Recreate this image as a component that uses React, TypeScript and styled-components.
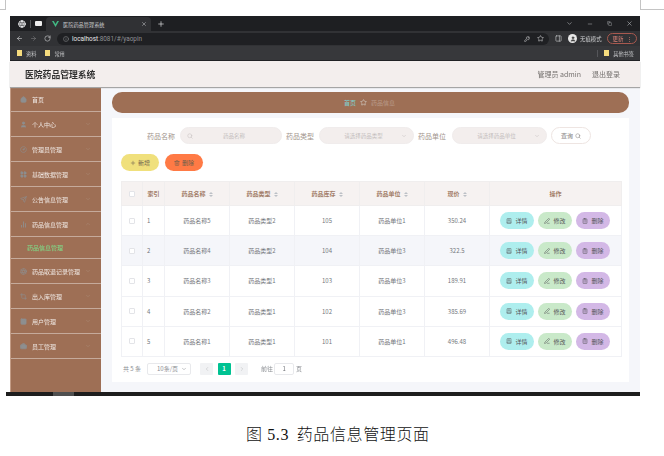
import React from "react";
import styled, { createGlobalStyle } from "styled-components";
import {
  ArrowLeft, ArrowRight, Aperture, BarChart2, BriefcaseBusiness, ChevronDown, ChevronLeft, ChevronRight, ChevronUp,
  CircleGauge, ClipboardList, Crop, Globe, Home, Info, KeyRound, LayoutGrid, Minus, PanelRight, PenLine, Plus, RotateCw,
  Search, Send, SquareUser, Star, Trash2, User, X, Copy, BookText,
} from "lucide-react";

const GlobalStyle = createGlobalStyle`
  * { box-sizing: border-box; }
  html, body { margin: 0; padding: 0; background: #fff; }
  body { font-family: "Noto Sans CJK SC", "Noto Sans", sans-serif; }
`;

const Page = styled.div`
  position: relative;
  width: 664px;
  height: 456px;
  background: #fff;
  overflow: hidden;
  padding: 16px 0 0 6px;
`;
const CropMark = styled.i<{ $side: "l" | "r" }>`
  position: absolute;
  top: 0;
  height: 10px;
  border-bottom: 1px solid #c4c4c4;
  ${(p) => (p.$side === "l" ? "left:0;width:6px;border-right:1px solid #c4c4c4;" : "left:640px;width:24px;border-left:1px solid #c4c4c4;")}
`;
const Frame = styled.div`
  width: 634px;
  height: 380px;
  display: flex;
  flex-direction: column;
  filter: blur(0.35px);
`;
const Browser = styled.div`
  margin-left: 4px;
  flex: 1;
  min-height: 0;
  display: flex;
  flex-direction: column;
`;
const TabStrip = styled.div`
  height: 15px;
  background: #1e1f22;
  display: flex;
  align-items: center;
  color: #e4e5e7;
  padding-left: 7px;
`;
const TabGlyph = styled.span`
  width: 9px;
  display: flex;
  justify-content: center;
`;
const TabDivider = styled.span`
  width: 1px;
  height: 8px;
  background: #55575a;
  margin: 0 4px;
`;
const WhiteRect = styled.span`
  width: 7px;
  height: 5px;
  background: #eee;
  border-radius: 1px;
`;
const Tab = styled.div`
  margin-left: 4px;
  width: 105px;
  height: 14px;
  align-self: flex-end;
  background: #303134;
  border-radius: 4px 4px 0 0;
  display: flex;
  align-items: center;
  padding: 0 4px 0 6px;
  font-size: 5.2px;
  color: #c9cacc;
  gap: 4px;
`;
const TabTitle = styled.span`
  flex: 1;
  white-space: nowrap;
`;
const NewTab = styled.span`
  margin-left: 6px;
  display: flex;
`;
const WindowControls = styled.div`
  margin-left: auto;
  display: flex;
  align-items: center;
  gap: 14px;
  padding-right: 7px;
  color: #b4b5b8;
`;
const Toolbar = styled.div`
  height: 15px;
  background: #313235;
  display: flex;
  align-items: center;
  padding-left: 6px;
  color: #d5d6d8;
`;
const NavIcons = styled.div`
  display: flex;
  gap: 7px;
  width: 41px;
`;
const Dim = styled.span`
  opacity: 0.45;
  display: flex;
`;
const AddressPill = styled.div`
  width: 492px;
  height: 12px;
  border-radius: 6px;
  background: #1f2023;
  display: flex;
  align-items: center;
  padding: 0 5px 0 6px;
  font-family: Roboto, sans-serif;
  font-size: 6.4px;
  color: #8f9093;
  gap: 3px;
`;
const Host = styled.span`
  color: #e6e6e8;
`;
const PillEnd = styled.div`
  margin-left: auto;
  display: flex;
  gap: 7px;
  align-items: center;
  color: #cfcfd1;
`;
const ToolRight = styled.div`
  display: flex;
  align-items: center;
  margin-left: 6px;
  gap: 5px;
  font-size: 5.4px;
  color: #cfd0d2;
`;
const Avatar = styled.span`
  width: 9px;
  height: 9px;
  border-radius: 50%;
  background: #e8e8e8;
  color: #444;
  display: flex;
  align-items: center;
  justify-content: center;
`;
const Incognito = styled.span`
  display: flex;
  align-items: center;
  gap: 3px;
  margin-left: 1px;
`;
const Update = styled.span`
  height: 11px;
  width: 30px;
  border: 1px solid #a8594f;
  border-radius: 6px;
  display: flex;
  align-items: center;
  justify-content: space-between;
  padding: 0 4px 0 5px;
  color: #e2857a;
`;
const Bookmarks = styled.div`
  height: 15px;
  background: #37383b;
  border-bottom: 1px solid #202124;
  display: flex;
  align-items: center;
  padding: 0 6px 0 7px;
  font-size: 5.2px;
  color: #c4c5c7;
`;
const Mark = styled.span`
  display: flex;
  align-items: center;
  gap: 4px;
  margin-right: 9px;
`;
const Folder = styled.i`
  width: 5px;
  height: 6px;
  background: #f6dc7e;
  display: block;
`;
const OtherMarks = styled.span`
  margin-left: auto;
  display: flex;
  align-items: center;
  gap: 4px;
  padding-left: 6px;
  border-left: 1px solid #55565a;
  height: 7px;
`;
const AppHeader = styled.header`
  height: 26px;
  background: #f3eeed;
  display: flex;
  align-items: center;
  padding: 0 20px 0 15px;
  position: relative;
  z-index: 1;
  box-shadow: 0 1px 1px #a5a5a5;
`;
const AppTitle = styled.h1`
  margin: 0;
  font-size: 8.8px;
  font-weight: 700;
  color: #2f2f2f;
  white-space: nowrap;
`;
const HeaderLink = styled.span<{ $first?: boolean }>`
  font-size: 7px;
  color: #74706e;
  margin-left: ${(p) => (p.$first ? "auto" : "11px")};
  white-space: nowrap;
`;
const Body = styled.div`
  flex: 1;
  min-height: 0;
  display: flex;
`;
const Sidebar = styled.nav`
  width: 91px;
  background: #9e6f55;
  border-left: 1px solid #c39c86;
  flex: none;
`;
const MenuRow = styled.div`
  height: 25px;
  display: flex;
  align-items: center;
  padding: 0 10px 0 9px;
  border-bottom: 1px solid #c5aa9b;
  font-size: 6px;
  color: #eee6e1;
  white-space: nowrap;
  gap: 5px;
`;
const MenuIcon = styled.span`
  width: 7px;
  display: flex;
  justify-content: center;
  color: #8e8f90;
`;
const MenuCaret = styled.span`
  margin-left: auto;
  display: flex;
  color: #ab8a77;
`;
const SubRow = styled.div`
  height: 22px;
  display: flex;
  align-items: center;
  padding-left: 16px;
  font-size: 6px;
  color: #7fe08a;
  border-bottom: 1px solid #c5aa9b;
`;
const Main = styled.main`
  flex: 1;
  min-width: 0;
  background: #f5f6fa;
  padding: 5px 11px 10px;
  display: flex;
  flex-direction: column;
  gap: 5px;
`;
const Crumb = styled.div`
  height: 21px;
  background: #9e6f55;
  border-radius: 10px;
  display: flex;
  align-items: center;
  justify-content: center;
  gap: 4px;
  padding-right: 2px;
  font-size: 6px;
`;
const CrumbHome = styled.span`
  color: #7fd2d2;
`;
const CrumbCur = styled.span`
  color: #b99a89;
`;
const CrumbStar = styled.span`
  display: flex;
  color: #d9d5d0;
`;
const Card = styled.section`
  flex: 1;
  min-height: 0;
  background: #fff;
  padding: 9px 8px 0 9px;
`;
const SearchRow = styled.div`
  height: 17px;
  display: flex;
  align-items: center;
  padding-left: 26px;
`;
const FieldLabel = styled.label<{ $gap: number }>`
  width: 28px;
  margin-right: ${(p) => p.$gap}px;
  font-size: 7px;
  color: #a2958d;
  white-space: nowrap;
`;
const Field = styled.div<{ $w: number }>`
  width: ${(p) => p.$w}px;
  height: 17px;
  margin-right: 4px;
  border-radius: 9px;
  background: #f3eeed;
  border: 1px solid #f0ecec;
  display: flex;
  align-items: center;
  padding: 0 6px;
  font-size: 5.5px;
  color: #c4bebe;
`;
const FieldText = styled.span`
  flex: 1;
  text-align: center;
  white-space: nowrap;
`;
const QueryButton = styled.button`
  width: 40px;
  height: 17px;
  border: 1px solid #eee5e2;
  border-radius: 9px;
  background: #fff;
  font: inherit;
  font-size: 6px;
  color: #84807e;
  display: flex;
  align-items: center;
  justify-content: center;
  gap: 2px;
  padding: 0;
`;
const ActionRow = styled.div`
  margin-top: 10px;
  height: 17px;
  display: flex;
  gap: 6px;
`;
const ActionButton = styled.button<{ $bg: string }>`
  width: 38px;
  height: 17px;
  border: 0;
  border-radius: 9px;
  background: ${(p) => p.$bg};
  font: inherit;
  font-size: 6px;
  color: #6a5f4c;
  display: flex;
  align-items: center;
  justify-content: center;
  gap: 2px;
  padding: 0;
`;
const Table = styled.table`
  margin-top: 10px;
  width: 500px;
  table-layout: fixed;
  border-collapse: collapse;
  font-size: 6px;
  color: #74777c;
`;
const Th = styled.th`
  height: 24px;
  background: #f6f2f1;
  border: 1px solid #f0eeee;
  padding: 0;
  font-size: 6px;
  font-weight: 700;
  color: #a37e69;
`;
const Tr = styled.tr<{ $striped: boolean }>`
  height: 30.2px;
  background: ${(p) => (p.$striped ? "#f5f6fa" : "#fff")};
`;
const Td = styled.td<{ $align?: string; $color?: string }>`
  border: 1px solid #f0f1f5;
  padding: ${(p) => (p.$align === "left" ? "0 0 0 4px" : "0")};
  text-align: ${(p) => p.$align || "center"};
  color: ${(p) => p.$color || "inherit"};
`;
const Check = styled.span`
  display: block;
  width: 6px;
  height: 6px;
  margin: 0 auto;
  background: #fff;
  border: 1px solid #e3e4e8;
  border-radius: 1px;
`;
const SortMark = styled.span`
  display: inline-flex;
  flex-direction: column;
  vertical-align: middle;
  margin-left: 3px;
  gap: 1px;
`;
const SortUp = styled.i`
  width: 0;
  height: 0;
  border: 2px solid transparent;
  border-top: 0;
  border-bottom: 2px solid #bcc0c6;
`;
const SortDown = styled.i`
  width: 0;
  height: 0;
  border: 2px solid transparent;
  border-bottom: 0;
  border-top: 2px solid #bcc0c6;
`;
const Ops = styled.div`
  display: flex;
  justify-content: center;
  gap: 4px;
  padding-right: 1px;
`;
const OpButton = styled.button<{ $bg: string }>`
  width: 34px;
  height: 17px;
  border: 0;
  border-radius: 9px;
  background: ${(p) => p.$bg};
  font: inherit;
  font-size: 6px;
  color: #57565a;
  display: flex;
  align-items: center;
  justify-content: center;
  gap: 3px;
  padding: 0;
`;
const Pager = styled.div`
  margin-top: 6px;
  height: 12px;
  padding-left: 2px;
  display: flex;
  align-items: center;
  font-size: 6px;
  color: #8b8e93;
`;
const SizeSelect = styled.div`
  width: 44px;
  height: 12px;
  margin-left: 6px;
  margin-right: 4.5px;
  border: 1px solid #e8e9ec;
  border-radius: 2px;
  display: flex;
  align-items: center;
  justify-content: space-between;
  padding: 0 3px 0 9px;
`;
const PageBtn = styled.span<{ $active?: boolean }>`
  width: 13px;
  height: 12px;
  margin-left: 4.5px;
  background: ${(p) => (p.$active ? "#00c292" : "#f1f2f4")};
  color: ${(p) => (p.$active ? "#fff" : "#b8babd")};
  font-weight: ${(p) => (p.$active ? 700 : 400)};
  border-radius: 1px;
  display: flex;
  align-items: center;
  justify-content: center;
`;
const GoLabel = styled.span`
  margin-left: 13px;
`;
const GoInput = styled.span`
  width: 20px;
  height: 12px;
  margin: 0 2px 0 1px;
  border: 1px solid #e8e9ec;
  border-radius: 2px;
  display: flex;
  align-items: center;
  justify-content: center;
  color: #74777c;
`;
const BottomBar = styled.div`
  height: 4px;
  background: #1e1e1e;
  padding-left: 47px;
  flex: none;
`;
const Thumb = styled.div`
  width: 21px;
  height: 4px;
  background: #4f4f4f;
`;
const Caption = styled.p`
  margin: 29px 0 0 -6px;
  width: 664px;
  padding-left: 246px;
  font-family: "Liberation Serif", "Noto Sans CJK SC", serif;
  font-size: 16px;
  line-height: 20px;
  color: #111;
  letter-spacing: 0.62px;
  white-space: pre;
  font-weight: 300;
`;
const CaptionTitle = styled.span`
  margin-left: 3px;
`;

const menu = [
  { t: "首页", i: <Home size={7} fill="currentColor" /> },
  { t: "个人中心", i: <User size={7} fill="currentColor" />, c: 1 },
  { t: "管理员管理", i: <CircleGauge size={7} />, c: 1 },
  { t: "基础数据管理", i: <LayoutGrid size={7} fill="currentColor" />, c: 1 },
  { t: "公告信息管理", i: <Send size={7} />, c: 1 },
];
const menu2 = [
  { t: "药品取退记录管理", i: <Aperture size={7} /> },
  { t: "出入库管理", i: <Crop size={7} /> },
  { t: "用户管理", i: <SquareUser size={7} fill="currentColor" /> },
  { t: "员工管理", i: <BriefcaseBusiness size={7} fill="currentColor" /> },
];
const rows = [
  ["1", "药品名称5", "药品类型2", "105", "药品单位1", "350.24"],
  ["2", "药品名称4", "药品类型2", "104", "药品单位3", "322.5"],
  ["3", "药品名称3", "药品类型1", "103", "药品单位3", "189.91"],
  ["4", "药品名称2", "药品类型1", "102", "药品单位3", "385.69"],
  ["5", "药品名称1", "药品类型1", "101", "药品单位1", "496.48"],
];
const widths = [21, 22, 65, 65, 65, 65, 65, 132];
const sortable = ["药品名称", "药品类型", "药品库存", "药品单位", "现价"];

const Sort = () => (
  <SortMark>
    <SortUp />
    <SortDown />
  </SortMark>
);

export default function App() {
  return (
    <Page>
      <GlobalStyle />
      <CropMark $side="l" />
      <CropMark $side="r" />
      <Frame>
        <Browser>
          <TabStrip>
            <TabGlyph><Globe size={8} strokeWidth={3} /></TabGlyph>
            <TabDivider />
            <WhiteRect />
            <Tab>
              <svg width="7" height="6" viewBox="0 0 14 12"><path d="M0 0h3.5L7 6l3.5-6H14L7 12z" fill="#41b883" /></svg>
              <TabTitle>医院药品管理系统</TabTitle>
              <X size={6} />
            </Tab>
            <NewTab><Plus size={8} /></NewTab>
            <WindowControls>
              <ChevronDown size={7} />
              <Minus size={6} />
              <Copy size={5} />
              <X size={7} />
            </WindowControls>
          </TabStrip>
          <Toolbar>
            <NavIcons>
              <ArrowLeft size={7} />
              <Dim><ArrowRight size={7} /></Dim>
              <RotateCw size={7} />
            </NavIcons>
            <AddressPill>
              <Info size={6} />
              <span><Host>localhost</Host>:8081/#/yaopin</span>
              <PillEnd>
                <KeyRound size={6} />
                <Star size={7} />
              </PillEnd>
            </AddressPill>
            <ToolRight>
              <PanelRight size={7} />
              <Incognito>
                <Avatar><User size={6} fill="currentColor" /></Avatar>
                无痕模式
              </Incognito>
              <Update>更新<span>⋮</span></Update>
            </ToolRight>
          </Toolbar>
          <Bookmarks>
            <Mark><Folder />资料</Mark>
            <Mark><Folder />常用</Mark>
            <OtherMarks><Folder />其他书签</OtherMarks>
          </Bookmarks>
          <AppHeader>
            <AppTitle>医院药品管理系统</AppTitle>
            <HeaderLink $first>管理员 admin</HeaderLink>
            <HeaderLink>退出登录</HeaderLink>
          </AppHeader>
          <Body>
            <Sidebar>
              {menu.map((m) => (
                <MenuRow key={m.t}>
                  <MenuIcon>{m.i}</MenuIcon>
                  {m.t}
                  {m.c && <MenuCaret><ChevronDown size={6} /></MenuCaret>}
                </MenuRow>
              ))}
              <MenuRow>
                <MenuIcon><BarChart2 size={7} strokeWidth={3} /></MenuIcon>
                药品信息管理
                <MenuCaret><ChevronUp size={6} /></MenuCaret>
              </MenuRow>
              <SubRow>药品信息管理</SubRow>
              {menu2.map((m) => (
                <MenuRow key={m.t}>
                  <MenuIcon>{m.i}</MenuIcon>
                  {m.t}
                  <MenuCaret><ChevronDown size={6} /></MenuCaret>
                </MenuRow>
              ))}
            </Sidebar>
            <Main>
              <Crumb>
                <CrumbHome>首页</CrumbHome>
                <CrumbStar><Star size={7} /></CrumbStar>
                <CrumbCur>药品信息</CrumbCur>
              </Crumb>
              <Card>
                <SearchRow>
                  <FieldLabel $gap={5}>药品名称</FieldLabel>
                  <Field $w={102}>
                    <Search size={6} />
                    <FieldText>药品名称</FieldText>
                  </Field>
                  <FieldLabel $gap={5}>药品类型</FieldLabel>
                  <Field $w={95}>
                    <FieldText>请选择药品类型</FieldText>
                    <ChevronDown size={6} />
                  </Field>
                  <FieldLabel $gap={6}>药品单位</FieldLabel>
                  <Field $w={95}>
                    <FieldText>请选择药品单位</FieldText>
                    <ChevronDown size={6} />
                  </Field>
                  <QueryButton>查询<Search size={6} /></QueryButton>
                </SearchRow>
                <ActionRow>
                  <ActionButton $bg="#f0e07c"><Plus size={6} />新增</ActionButton>
                  <ActionButton $bg="#ff7a45"><Trash2 size={6} />删除</ActionButton>
                </ActionRow>
                <Table>
                  <colgroup>
                    {widths.map((w, i) => <col key={i} style={{ width: w }} />)}
                  </colgroup>
                  <thead>
                    <tr>
                      <Th><Check /></Th>
                      <Th>索引</Th>
                      {sortable.map((s) => <Th key={s}>{s}<Sort /></Th>)}
                      <Th>操作</Th>
                    </tr>
                  </thead>
                  <tbody>
                    {rows.map((r, idx) => (
                      <Tr key={r[0]} $striped={idx === 1}>
                        <Td><Check /></Td>
                        <Td $align="left">{r[0]}</Td>
                        <Td>{r[1]}</Td>
                        <Td>{r[2]}</Td>
                        <Td>{r[3]}</Td>
                        <Td>{r[4]}</Td>
                        <Td>{r[5]}</Td>
                        <Td>
                          <Ops>
                            <OpButton $bg="#aeeeee"><BookText size={6} />详情</OpButton>
                            <OpButton $bg="#c9e9c9"><PenLine size={6} />修改</OpButton>
                            <OpButton $bg="#d3b8e6"><ClipboardList size={6} />删除</OpButton>
                          </Ops>
                        </Td>
                      </Tr>
                    ))}
                  </tbody>
                </Table>
                <Pager>
                  共 5 条
                  <SizeSelect>10条/页<ChevronDown size={6} /></SizeSelect>
                  <PageBtn><ChevronLeft size={6} /></PageBtn>
                  <PageBtn $active>1</PageBtn>
                  <PageBtn><ChevronRight size={6} /></PageBtn>
                  <GoLabel>前往</GoLabel>
                  <GoInput>1</GoInput>
                  页
                </Pager>
              </Card>
            </Main>
          </Body>
        </Browser>
        <BottomBar><Thumb /></BottomBar>
      </Frame>
      <Caption>图 5.3 <CaptionTitle>药品信息管理页面</CaptionTitle></Caption>
    </Page>
  );
}
